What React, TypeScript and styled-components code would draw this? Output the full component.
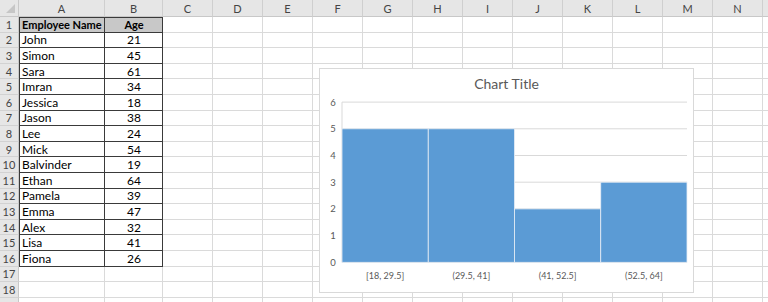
import React from 'react';
import styled, { createGlobalStyle } from 'styled-components';

const GlobalStyle = createGlobalStyle`
  html, body {
    margin: 0;
    padding: 0;
    background: #ffffff;
    overflow: hidden;
  }
  body {
    font-family: Lato, 'Liberation Sans', sans-serif;
  }
`;

const gridLine = '#dadada';
const tableLine = '#3a3a3a';
const headerBg = '#e6e6e6';
const headerText = '#444444';
const barColor = '#5b9bd5';
const axisText = '#595959';

// last column only peeks in at the right edge, so it carries no label
const columns = ['A', 'B', 'C', 'D', 'E', 'F', 'G', 'H', 'I', 'J', 'K', 'L', 'M', 'N', ''];
const columnWidths = [86, 58, 50, 50, 50, 50, 50, 50, 50, 50, 50, 50, 50, 50, 50];
const visibleRows = 18;

const employees: [string, number][] = [
  ['John', 21],
  ['Simon', 45],
  ['Sara', 61],
  ['Imran', 34],
  ['Jessica', 18],
  ['Jason', 38],
  ['Lee', 24],
  ['Mick', 54],
  ['Balvinder', 19],
  ['Ethan', 64],
  ['Pamela', 39],
  ['Emma', 47],
  ['Alex', 32],
  ['Lisa', 41],
  ['Fiona', 26],
];

const bins = [
  { label: '[18, 29.5]', count: 5 },
  { label: '(29.5, 41]', count: 5 },
  { label: '(41, 52.5]', count: 2 },
  { label: '(52.5, 64]', count: 3 },
];

const Page = styled.div`
  position: relative;
  width: 768px;
  height: 302px;
  overflow: hidden;
`;

const Sheet = styled.div`
  display: grid;
  grid-template-columns: 19px ${columnWidths.map(w => `${w}px`).join(' ')};
  grid-template-rows: 17px repeat(19, 15.6px);
  font-size: 12px;
  color: #000;
`;

const Corner = styled.div`
  position: relative;
  background: ${headerBg};
  border-right: 1px solid #c8c8c8;
  border-bottom: 1px solid #c8c8c8;
  box-sizing: border-box;

  &::after {
    content: '';
    position: absolute;
    right: 3px;
    bottom: 3px;
    width: 0;
    height: 0;
    border-left: 9px solid transparent;
    border-bottom: 9px solid #c6c6c6;
  }
`;

const ColHeader = styled.div`
  display: flex;
  align-items: center;
  justify-content: center;
  background: ${headerBg};
  color: ${headerText};
  font-size: 11px;
  border-right: 1px solid #cfcfcf;
  border-bottom: 1px solid #c8c8c8;
  box-sizing: border-box;
`;

const RowHeader = styled.div`
  display: flex;
  align-items: center;
  justify-content: center;
  background: ${headerBg};
  color: ${headerText};
  font-size: 11px;
  border-right: 1px solid #c8c8c8;
  border-bottom: 1px solid #d2d2d2;
  box-sizing: border-box;
`;

const Cell = styled.div<{ $table?: boolean; $head?: boolean; $first?: boolean; $top?: boolean; $align?: 'left' | 'center' }>`
  display: flex;
  align-items: center;
  justify-content: ${p => (p.$align === 'center' ? 'center' : 'flex-start')};
  padding: 0 2px 0 3px;
  box-sizing: border-box;
  white-space: nowrap;
  overflow: hidden;
  background: ${p => (p.$head ? '#c8c8c8' : '#ffffff')};
  font-weight: ${p => (p.$head ? 700 : 400)};
  font-size: ${p => (p.$head ? '11px' : '12px')};
  border-right: 1px solid ${p => (p.$table ? tableLine : gridLine)};
  border-bottom: 1px solid ${p => (p.$table ? tableLine : gridLine)};
  box-shadow: ${p =>
    [p.$first ? `inset 1px 0 0 ${tableLine}` : '', p.$top ? `inset 0 1px 0 ${tableLine}` : '']
      .filter(Boolean)
      .join(', ') || 'none'};
`;

const ChartBox = styled.div`
  position: absolute;
  left: 319px;
  top: 68px;
  width: 375px;
  height: 225px;
  box-sizing: border-box;
  background: #ffffff;
  border: 1px solid #d9d9d9;
  display: flex;
  flex-direction: column;
`;

const ChartTitle = styled.div`
  height: 28px;
  display: flex;
  align-items: center;
  justify-content: center;
  font-size: 14px;
  color: ${axisText};
`;

const PlotSvg = styled.svg`
  display: block;
  overflow: visible;
  font-family: Lato, 'Liberation Sans', sans-serif;
`;

const Histogram: React.FC = () => {
  const left = 22;
  const right = 367;
  const zeroY = 165.3;
  const unit = 26.7;
  const max = 6;
  const barW = (right - left) / bins.length;
  const ticks = Array.from({ length: max + 1 }, (_, i) => i);

  return (
    <PlotSvg width={373} height={195} viewBox="0 0 373 195">
      {ticks.map(t => (
        <g key={t}>
          <line x1={left} x2={right} y1={zeroY - t * unit} y2={zeroY - t * unit} stroke="#d9d9d9" strokeWidth={1} />
          <text x={13} y={zeroY - t * unit + 3.5} fontSize={9.5} fill={axisText} textAnchor="middle">
            {t}
          </text>
        </g>
      ))}
      <line x1={left} x2={left} y1={zeroY - max * unit} y2={zeroY} stroke="#d9d9d9" strokeWidth={1} />
      {bins.map((b, i) => (
        <g key={b.label}>
          <rect
            x={left + i * barW}
            y={zeroY - b.count * unit}
            width={barW}
            height={b.count * unit}
            fill={barColor}
            stroke="#e8eef6"
            strokeWidth={0.8}
          />
          <text x={left + i * barW + barW / 2} y={182} fontSize={9} fill={axisText} textAnchor="middle">
            {b.label}
          </text>
        </g>
      ))}
    </PlotSvg>
  );
};

export default function App() {
  const totalRows = 19;
  const cells: React.ReactNode[] = [];

  cells.push(<Corner key="corner" />);
  columns.forEach((c, ci) => cells.push(<ColHeader key={`h-${ci}`}>{c}</ColHeader>));

  for (let r = 1; r <= totalRows; r++) {
    cells.push(<RowHeader key={`r-${r}`}>{r <= visibleRows ? r : null}</RowHeader>);
    columns.forEach((_, ci) => {
      const inTable = r <= 16 && ci < 2;
      let content: React.ReactNode = null;
      if (r === 1 && ci === 0) content = 'Employee Name';
      if (r === 1 && ci === 1) content = 'Age';
      if (r > 1 && r <= 16) {
        const [name, age] = employees[r - 2];
        if (ci === 0) content = name;
        if (ci === 1) content = age;
      }
      cells.push(
        <Cell
          key={`${ci}-${r}`}
          $table={inTable}
          $head={inTable && r === 1}
          $first={inTable && ci === 0}
          $top={inTable && r === 1}
          $align={ci === 1 ? 'center' : 'left'}
        >
          {content}
        </Cell>,
      );
    });
  }

  return (
    <Page>
      <GlobalStyle />
      <Sheet>{cells}</Sheet>
      <ChartBox>
        <ChartTitle>Chart Title</ChartTitle>
        <Histogram />
      </ChartBox>
    </Page>
  );
}
